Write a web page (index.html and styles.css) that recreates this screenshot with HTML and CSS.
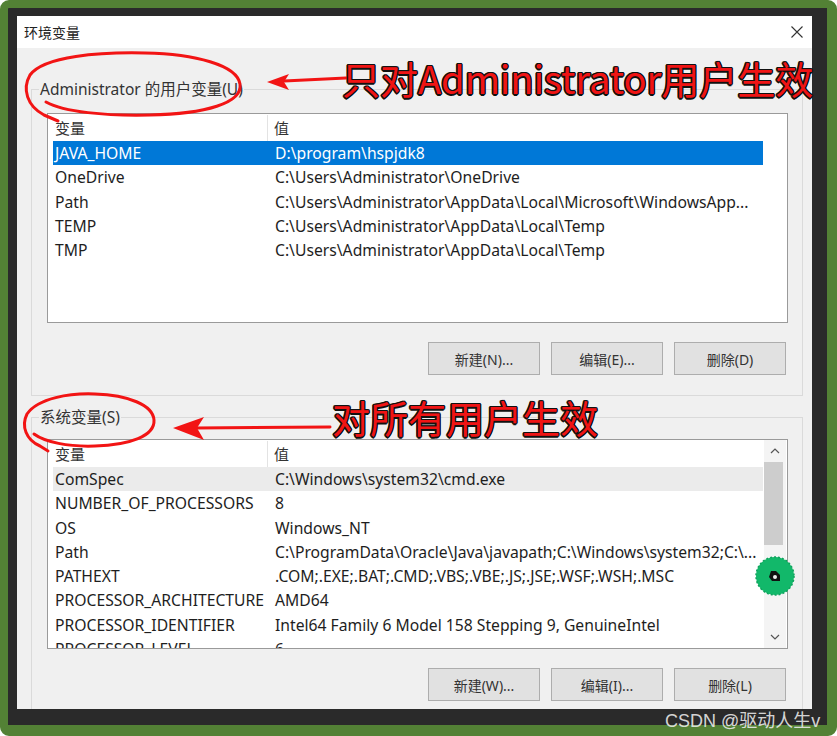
FILE: index.html
```html
<!DOCTYPE html>
<html lang="zh">
<head>
<meta charset="utf-8">
<title>环境变量</title>
<link rel="stylesheet" href="styles.css">
</head>
<body>
<div class="frame">
  <div class="dialog">
    <div class="titlebar">
      <span class="title">环境变量</span>
      <svg class="close" width="12" height="12" viewBox="0 0 12 12"><path d="M0.5 0.5 L11.5 11.5 M11.5 0.5 L0.5 11.5" stroke="#333" stroke-width="1.1" fill="none"/></svg>
    </div>
    <div class="body">
      <fieldset class="group group-user">
        <legend>Administrator 的用户变量(U)</legend>
        <div class="list">
          <div class="list-content">
            <div class="head"><span class="hc1">变量</span><span class="hc2">值</span></div>
            <div class="row selected"><span class="c1">JAVA_HOME</span><span class="c2">D:\program\hspjdk8</span></div>
            <div class="row"><span class="c1">OneDrive</span><span class="c2">C:\Users\Administrator\OneDrive</span></div>
            <div class="row"><span class="c1">Path</span><span class="c2">C:\Users\Administrator\AppData\Local\Microsoft\WindowsApp...</span></div>
            <div class="row"><span class="c1">TEMP</span><span class="c2">C:\Users\Administrator\AppData\Local\Temp</span></div>
            <div class="row"><span class="c1">TMP</span><span class="c2">C:\Users\Administrator\AppData\Local\Temp</span></div>
          </div>
        </div>
        <div class="buttons">
          <button class="btn">新建(N)...</button>
          <button class="btn">编辑(E)...</button>
          <button class="btn">删除(D)</button>
        </div>
      </fieldset>
      <fieldset class="group group-sys">
        <legend>系统变量(S)</legend>
        <div class="list">
          <div class="list-content">
            <div class="head"><span class="hc1">变量</span><span class="hc2">值</span></div>
            <div class="row hover"><span class="c1">ComSpec</span><span class="c2">C:\Windows\system32\cmd.exe</span></div>
            <div class="row"><span class="c1">NUMBER_OF_PROCESSORS</span><span class="c2">8</span></div>
            <div class="row"><span class="c1">OS</span><span class="c2">Windows_NT</span></div>
            <div class="row"><span class="c1">Path</span><span class="c2">C:\ProgramData\Oracle\Java\javapath;C:\Windows\system32;C:\...</span></div>
            <div class="row"><span class="c1">PATHEXT</span><span class="c2">.COM;.EXE;.BAT;.CMD;.VBS;.VBE;.JS;.JSE;.WSF;.WSH;.MSC</span></div>
            <div class="row"><span class="c1">PROCESSOR_ARCHITECTURE</span><span class="c2">AMD64</span></div>
            <div class="row"><span class="c1">PROCESSOR_IDENTIFIER</span><span class="c2">Intel64 Family 6 Model 158 Stepping 9, GenuineIntel</span></div>
            <div class="row"><span class="c1">PROCESSOR_LEVEL</span><span class="c2">6</span></div>
          </div>
          <div class="scrollbar">
            <div class="sb-btn"><svg width="10" height="6" viewBox="0 0 10 6"><path d="M1 5 L5 1 L9 5" stroke="#555" stroke-width="1.2" fill="none"/></svg></div>
            <div class="sb-track"><div class="sb-thumb"></div></div>
            <div class="sb-btn"><svg width="10" height="6" viewBox="0 0 10 6"><path d="M1 1 L5 5 L9 1" stroke="#555" stroke-width="1.2" fill="none"/></svg></div>
          </div>
        </div>
        <div class="buttons">
          <button class="btn">新建(W)...</button>
          <button class="btn">编辑(I)...</button>
          <button class="btn">删除(L)</button>
        </div>
      </fieldset>
    </div>
  </div>
</div>

<svg class="marks" width="837" height="736" viewBox="0 0 837 736">
  <g fill="none" stroke="#f21414" stroke-width="3" stroke-linecap="round" stroke-linejoin="round">
    <path d="M58 121 L44 115 C27 106 22 89 30 75 C44 56 100 52 145 53 C195 54 237 65 240 84 C243 103 205 114 150 115 C105 116 64 112 46 102"/>
    <path d="M48 451 L40 446 C26 440 21 426 27 414 C38 398 70 393 95 394 C128 395 153 405 154 420 C155 436 130 445 95 446 C68 447 45 442 34 434"/>
    <path d="M284 81 L346 78"/>
    <path d="M196 428 L330 427"/>
  </g>
  <g fill="#f21414">
    <path d="M267 82 L289 74 L284 82 L289 90 Z"/>
    <path d="M173 428 L204 417 L197 428 L204 440 Z"/>
  </g>
  <g>
    <circle cx="775" cy="576" r="19" fill="#12b86a" stroke="#0ea35c" stroke-width="1.5" stroke-dasharray="2 2"/>
    <path d="M771 571 L776 571 L780 575 L780 581 L772 581 L769 577 Z" fill="#111"/>
    <circle cx="775" cy="577" r="2" fill="#eee"/>
  </g>
</svg>
<div class="note note-user">只对Administrator用户生效</div>
<div class="note note-sys">对所有用户生效</div>
<div class="watermark">CSDN @驱动人生v</div>
</body>
</html>
```
FILE: styles.css
```css
html, body {
  margin: 0;
  padding: 0;
  background: #ffffff;
}
body {
  position: relative;
  width: 837px;
  height: 736px;
  overflow: hidden;
  font-family: "Noto Sans", "Noto Sans CJK SC", sans-serif;
}
.frame {
  box-sizing: border-box;
  width: 837px;
  height: 736px;
  border-style: solid;
  border-color: #538135;
  border-width: 8px 10px 11px 8px;
  border-radius: 9px;
  background: #2a2a2a;
  padding: 8px 15px 16px 9px;
}
.dialog {
  height: 693px;
  display: flex;
  flex-direction: column;
  background: #f0f0f0;
  overflow: hidden;
}
.titlebar {
  height: 32px;
  flex: none;
  background: #ffffff;
  display: flex;
  align-items: center;
  justify-content: space-between;
  padding: 0 9px 0 7px;
}
.title {
  font-family: "Noto Sans CJK SC", sans-serif;
  font-size: 14px;
  color: #222;
}
.body {
  flex: 1;
  padding-top: 31px;
  overflow: hidden;
}
.group {
  margin: 0 9px 0 14px;
  border: 1px solid #dadada;
  padding: 14px 14px 20px 15px;
  min-width: 0;
}
.group legend {
  margin-left: -8px;
  padding: 0 1px;
  height: 20px;
  line-height: 20px;
  font-size: 15.5px;
  color: #333;
}
.group-sys {
  margin-top: 11px;
  padding-top: 12px;
  border-bottom: none;
}
.list {
  box-sizing: border-box;
  height: 210px;
  border: 1px solid #9a9a9a;
  background: #ffffff;
  display: flex;
  overflow: hidden;
}
.list-content {
  width: 716px;
  padding-left: 5px;
  box-sizing: border-box;
  overflow: hidden;
}
.head {
  height: 27px;
  display: flex;
  align-items: center;
  width: 710px;
  font-size: 15px;
  color: #333;
}
.hc1 {
  width: 215px;
  box-sizing: border-box;
  padding-left: 2px;
  border-right: 1px solid #e3e3e3;
  height: 26px;
  line-height: 26px;
}
.hc2 {
  padding-left: 6px;
}
.row {
  width: 710px;
  height: 24.25px;
  line-height: 24px;
  display: flex;
  font-size: 15.7px;
  color: #1e1e1e;
  white-space: nowrap;
}
.row.selected {
  background: #0078d7;
  color: #ffffff;
}
.row.hover {
  background: #ebebeb;
}
.c1 {
  width: 220px;
  flex: none;
  box-sizing: border-box;
  padding-left: 2px;
  overflow: hidden;
}
.c2 {
  flex: 1;
  padding-left: 2px;
  overflow: hidden;
}
.scrollbar {
  width: 22px;
  flex: none;
  display: flex;
  flex-direction: column;
  background: #f4f4f4;
}
.sb-btn {
  height: 22px;
  display: flex;
  align-items: center;
  justify-content: center;
}
.sb-track {
  flex: 1;
  padding: 0 3px 0 0;
}
.sb-thumb {
  height: 83px;
  background: #cdcdcd;
}
.buttons {
  margin-top: 19px;
  margin-right: 2px;
  display: flex;
  justify-content: flex-end;
  gap: 11px;
}
.btn {
  width: 112px;
  height: 33px;
  box-sizing: border-box;
  background: #e1e1e1;
  border: 1px solid #adadad;
  font-family: "Noto Sans", "Noto Sans CJK SC", sans-serif;
  font-size: 14px;
  color: #333;
  padding: 0;
}
.marks {
  position: absolute;
  left: 0;
  top: 0;
  pointer-events: none;
}
.note {
  position: absolute;
  font-family: "Noto Sans CJK SC", sans-serif;
  font-size: 38px;
  line-height: 1;
  color: #f01414;
  white-space: nowrap;
  text-shadow: -1.5px 0 #111, 1.5px 0 #111, 0 -1.5px #111, 0 1.5px #111, -1px -1px #111, 1px 1px #111, -1px 1px #111, 1px -1px #111;
}
.note-user {
  left: 342px;
  top: 59px;
}
.note-sys {
  left: 332px;
  top: 398px;
}
.watermark {
  position: absolute;
  left: 665px;
  top: 706px;
  font-family: "Liberation Sans", "Noto Sans CJK SC", sans-serif;
  font-size: 18px;
  color: rgba(235, 235, 235, 0.9);
  white-space: nowrap;
}
```
